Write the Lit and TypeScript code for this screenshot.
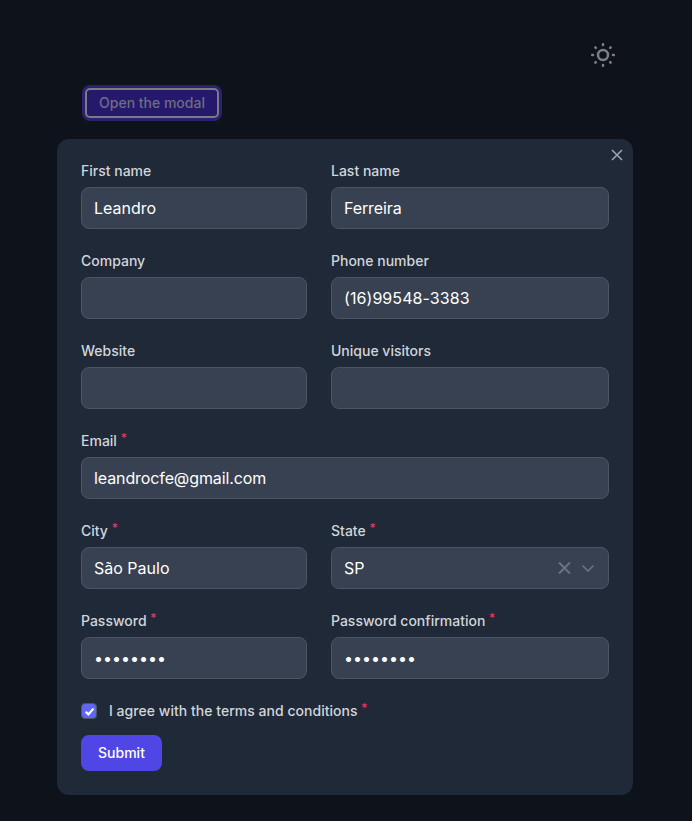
import { LitElement, html, css, svg } from "lit";
import { customElement } from "lit/decorators.js";

@customElement("app-root")
export class AppRoot extends LitElement {
  static styles = css`
    :host { display: block; height: 821px; background: #0e131b; font-family: Inter, "Liberation Sans", sans-serif; overflow: hidden; box-sizing: border-box; }
    * { box-sizing: border-box; }
    .top { display: flex; justify-content: flex-end; padding: 40px 74px 0 0; height: 85px; }
    .sun { width: 30px; height: 30px; display: block; color: #7d7f84; }
    .open-wrap { padding-left: 82px; height: 54px; }
    .open {
      display: block; width: 140px; height: 36px; border-radius: 8px; border: 3px solid #2a2170; background: #24196b;
      padding: 0; font: 500 14px/1 Inter, sans-serif; color: #6f6c85; position: relative;
      outline: 2px solid #7b7b80; outline-offset: -5px;
    }
    .panel { position: relative; margin-left: 57px; width: 576px; height: 656px; background: #1f2937; border-radius: 12px; padding: 24px; }
    .close { position: absolute; top: 10px; right: 10px; width: 12px; height: 12px; margin: 0; color: #9ca3af; display: block; }
    .grid { display: grid; grid-template-columns: 226px 278px; column-gap: 24px; row-gap: 24px; }
    .field { display: flex; flex-direction: column; height: 66px; }
    .full { grid-column: 1 / 3; }
    label { font-size: 14px; font-weight: 500; line-height: 16px; height: 24px; color: #d1d5db; display: block; }
    .req { color: #d8405f; font-size: 12px; position: relative; top: -4px; }
    .box { position: relative; height: 42px; }
    input.text {
      width: 100%; height: 42px; background: #374151; border: 1px solid #4b5563; border-radius: 8px; color: #fff;
      padding: 0 12px; font: 400 16px Inter, sans-serif; outline: none; display: block;
    }
    input.tight { letter-spacing: -0.1px; }
    input.wide { letter-spacing: 0.07px; }
    .icons { position: absolute; right: 14px; top: 14px; display: flex; align-items: center; gap: 10px; color: #6b7280; }
    .icons svg { display: block; width: 14px; height: 14px; }
    .agree { display: flex; align-items: center; margin-top: 20px; height: 24px; font-size: 14px; font-weight: 500; color: #d1d5db; }
    .agree-text { padding-bottom: 2px; letter-spacing: 0.03px; }
    .check { width: 16px; height: 16px; margin-right: 12px; border-radius: 4px; background: #6366f1; border: 1px solid #4b5563; display: flex; align-items: center; justify-content: center; }
    .check svg { width: 11px; height: 11px; display: block; }
    .submit { display: block; margin-top: 12px; width: 81px; height: 36px; border: 0; border-radius: 8px; background: #4f46e5; color: #fff; font: 500 14px Inter, sans-serif; padding: 0 0 2px; }
  `;

  private field(name: string, value = "", opts: { req?: boolean; type?: string; full?: boolean; select?: boolean; cls?: string } = {}) {
    return html`<div class="field ${opts.full ? "full" : ""}">
      <label>${name}${opts.req ? html` <span class="req">*</span>` : ""}</label>
      <div class="box">
        <input class="text ${opts.cls ?? ""}" type=${opts.type ?? "text"} .value=${value} aria-label=${name} />
        ${opts.select ? html`<div class="icons">
          <svg viewBox="0 0 14 14" fill="none" stroke="currentColor" stroke-width="2"><path d="M2 1.5l11 11M13 1.5l-11 11"/></svg>
          <svg viewBox="0 0 14 14" fill="none" stroke="currentColor" stroke-width="1.6"><path d="M1.5 4.5L7 10l5.5-5.5"/></svg>
        </div>` : ""}
      </div>
    </div>`;
  }

  render() {
    const rays = [[15,4.2,15,5],[15,25,15,25.8],[4.2,15,5,15],[25,15,25.8,15],[7.4,7.4,7.8,7.8],[22.2,22.2,22.6,22.6],[7.4,22.6,7.8,22.2],[22.2,7.8,22.6,7.4]];
    return html`
      <div class="top">
        <svg class="sun" viewBox="0 0 30 30" fill="none" stroke="currentColor" stroke-width="2.5" stroke-linecap="round">
          <circle cx="15" cy="15" r="5"></circle>
          ${rays.map(([a, b, c, d]) => svg`<line x1=${a} y1=${b} x2=${c} y2=${d}></line>`)}
        </svg>
      </div>
      <div class="open-wrap"><button class="open">Open the modal</button></div>
      <div class="panel">
        <svg class="close" viewBox="0 0 12 12" fill="none" stroke="currentColor" stroke-width="1.6"><path d="M1 1l10 10M11 1L1 11"/></svg>
        <div class="grid">
          ${this.field("First name", "Leandro")}
          ${this.field("Last name", "Ferreira", { cls: "tight" })}
          ${this.field("Company")}
          ${this.field("Phone number", "(16)99548-3383", { cls: "wide" })}
          ${this.field("Website")}
          ${this.field("Unique visitors")}
          ${this.field("Email", "leandrocfe@gmail.com", { req: true, full: true, cls: "tight" })}
          ${this.field("City", "São Paulo", { req: true })}
          ${this.field("State", "SP", { req: true, select: true })}
          ${this.field("Password", "password", { req: true, type: "password" })}
          ${this.field("Password confirmation", "password", { req: true, type: "password" })}
        </div>
        <div class="agree">
          <span class="check"><svg viewBox="0 0 10 10" fill="none" stroke="#fff" stroke-width="2"><path d="M1.5 5.2L4 7.6 8.6 2.4"/></svg></span>
          <span class="agree-text">I agree with the terms and conditions <span class="req">*</span></span>
        </div>
        <button class="submit">Submit</button>
      </div>
    `;
  }
}
